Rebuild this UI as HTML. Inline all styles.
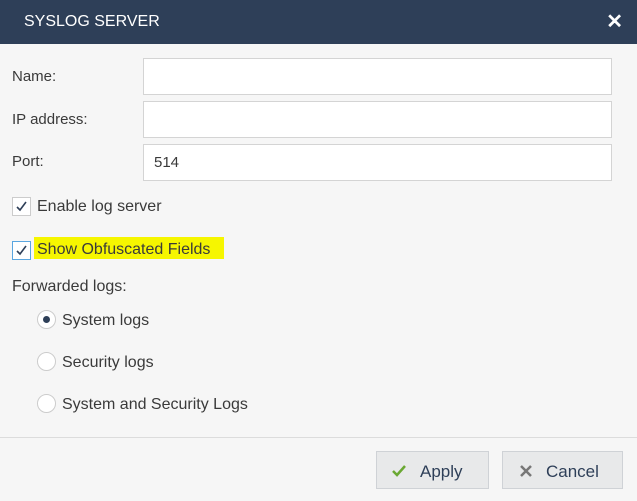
<!DOCTYPE html><html><head><style>
*{box-sizing:border-box}body{margin:0;width:637px;height:501px;background:#f6f6f6;font-family:"Liberation Sans",sans-serif;color:#3a3a3a;position:relative;overflow:hidden;font-size:15px}
.hd{position:absolute;left:0;top:0;width:637px;height:44px;background:#2e3f58;color:#fff;font-size:16px}
.hd span{position:absolute;left:24px;top:13px}
.x{position:absolute;right:14px;top:9px;font-size:20px;font-weight:bold}
.a{position:absolute}
.in{position:absolute;left:143px;width:469px;height:37px;background:#fff;border:1px solid #d4d4d4;padding:9px 10px;font-size:15px}
.cb{position:absolute;left:12px;width:19px;height:19px;background:#fff;border:1px solid #ccc}
.rd{position:absolute;left:37px;width:19px;height:19px;background:#fff;border:1px solid #ccc;border-radius:50%}
.btn{position:absolute;top:451px;height:38px;background:#e8e9ea;border:1px solid #cfd2d6;font-size:17px;color:#2e3f58}
</style></head><body>
<div class="hd"><span>SYSLOG SERVER</span><div class="x">✕</div></div>
<div class="a" style="left:12px;top:68px">Name:</div><div class="in" style="top:58px"></div>
<div class="a" style="left:12px;top:111px">IP address:</div><div class="in" style="top:101px"></div>
<div class="a" style="left:12px;top:153px">Port:</div><div class="in" style="top:144px">514</div>
<div class="cb" style="top:197px"><svg width="17" height="17"><path d="M4 9l3 3 6-8" stroke="#2e3f58" stroke-width="1.6" fill="none"/></svg></div>
<div class="a" style="left:37px;top:198px;font-size:16px">Enable log server</div>
<div class="a" style="left:34px;top:237px;width:190px;height:22px;background:#f6f600"></div>
<div class="cb" style="top:241px;border-color:#5aa6e0"><svg width="17" height="17"><path d="M4 9l3 3 6-8" stroke="#2e3f58" stroke-width="1.6" fill="none"/></svg></div>
<div class="a" style="left:37px;top:241px;font-size:16px">Show Obfuscated Fields</div>
<div class="a" style="left:12px;top:278px;font-size:16px">Forwarded logs:</div>
<div class="rd" style="top:310px"><div style="position:absolute;left:5px;top:5px;width:7px;height:7px;border-radius:50%;background:#2e3f58"></div></div>
<div class="a" style="left:62px;top:312px;font-size:16px">System logs</div>
<div class="rd" style="top:352px"></div>
<div class="a" style="left:62px;top:354px;font-size:16px">Security logs</div>
<div class="rd" style="top:394px"></div>
<div class="a" style="left:62px;top:396px;font-size:16px">System and Security Logs</div>
<div class="a" style="left:0;top:437px;width:637px;height:1px;background:#dcdcdc"></div>
<div class="btn" style="left:376px;width:113px"><svg class="a" style="left:14px;top:12px" width="16" height="14"><path d="M2 7l4 4 8-9" stroke="#6aa833" stroke-width="2.5" fill="none"/></svg><span class="a" style="left:43px;top:10px">Apply</span></div>
<div class="btn" style="left:502px;width:121px"><svg class="a" style="left:16px;top:12px" width="14" height="14"><path d="M2 2l10 10M12 2L2 12" stroke="#777" stroke-width="2.5"/></svg><span class="a" style="left:43px;top:10px">Cancel</span></div>
</body></html>
